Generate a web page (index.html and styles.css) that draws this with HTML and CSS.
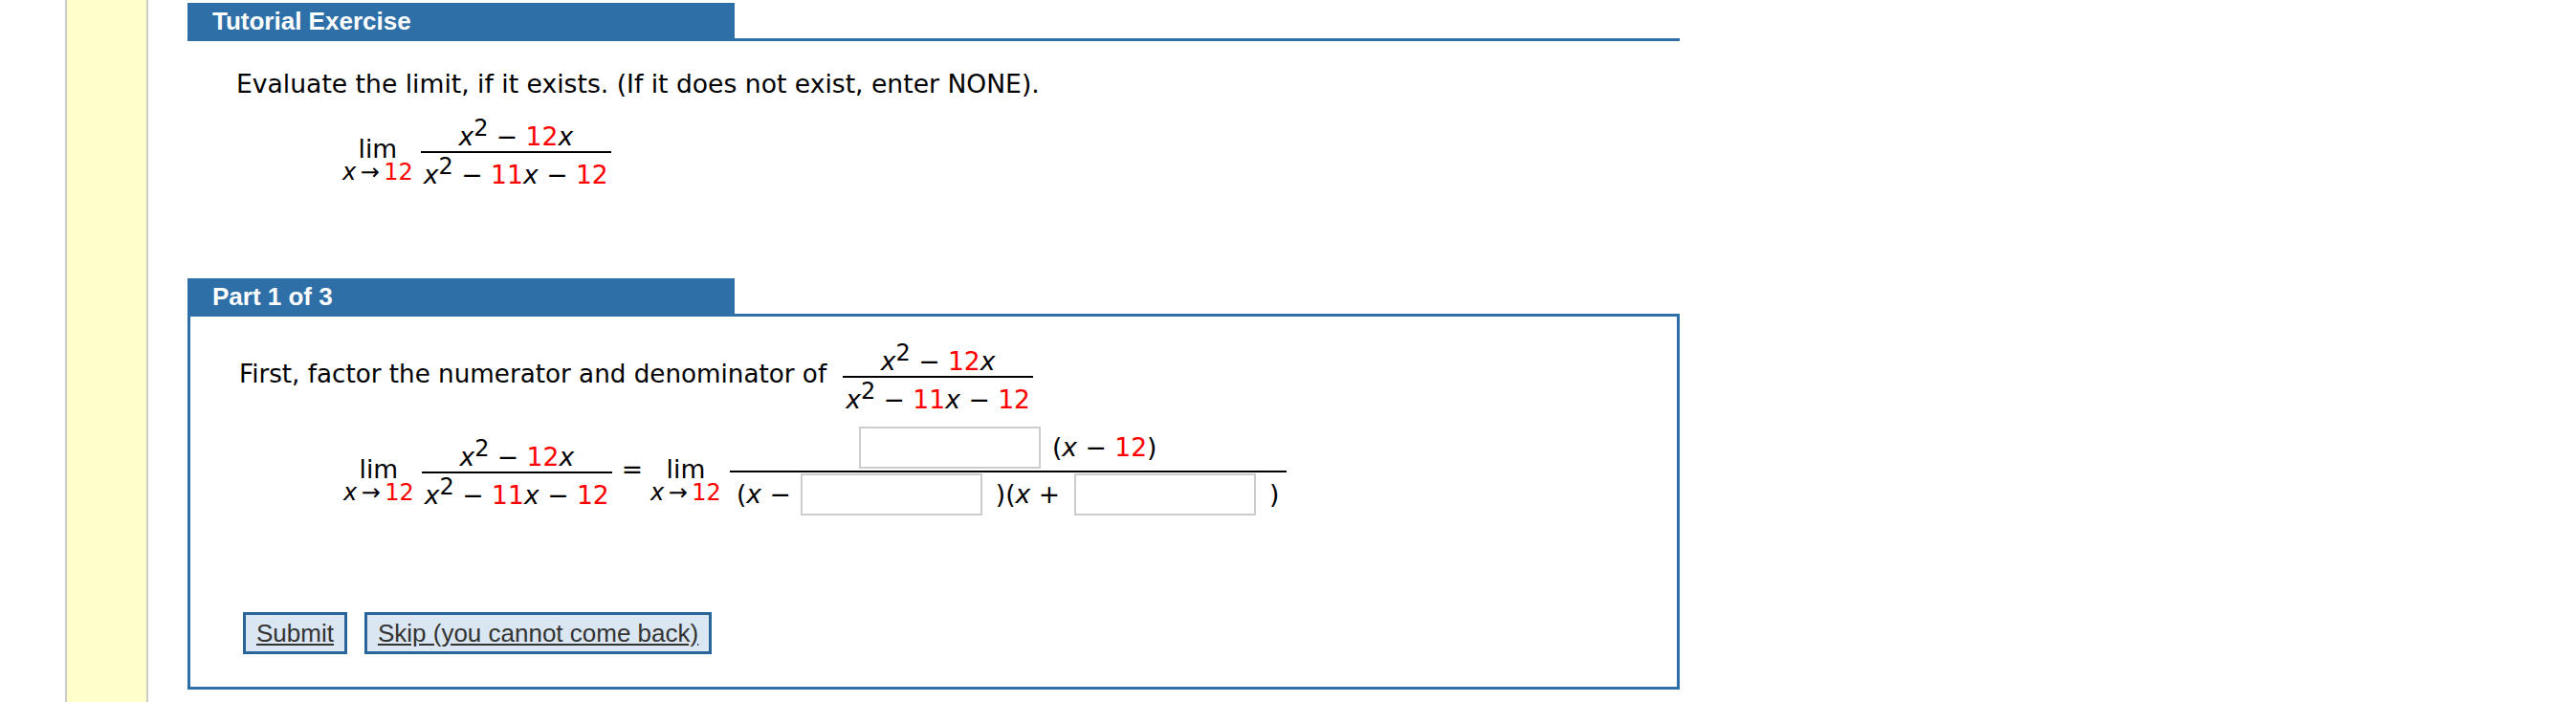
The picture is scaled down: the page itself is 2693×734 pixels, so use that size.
FILE: index.html
```html
<!DOCTYPE html>
<html lang="en">
<head>
  <meta charset="UTF-8">
  <title>Tutorial Exercise</title>
  <link rel="stylesheet" href="styles.css">
</head>
<body>

  <div class="sidebar"></div>

  <div class="main">
    <div class="tab-row">
      <div class="tab">Tutorial Exercise</div>
    </div>

    <div class="intro">
      <p class="question">Evaluate the limit, if it exists. (If it does not exist, enter NONE).</p>
      <div class="math math-first">
        <div class="lim"><span>lim</span><span class="lim-to"><i>x</i><span class="arrow">→</span><b>12</b></span></div>
        <div class="frac">
          <div class="num"><i>x</i><sup>2</sup> − <b>12</b><i>x</i></div>
          <div class="den"><i>x</i><sup>2</sup> − <b>11</b><i>x</i> − <b>12</b></div>
        </div>
      </div>
    </div>

    <div class="tab-row">
      <div class="tab">Part 1 of 3</div>
    </div>

    <div class="panel">
      <div class="factor-line">
        <span class="factor-text">First, factor the numerator and denominator of</span>
        <div class="frac">
          <div class="num"><i>x</i><sup>2</sup> − <b>12</b><i>x</i></div>
          <div class="den"><i>x</i><sup>2</sup> − <b>11</b><i>x</i> − <b>12</b></div>
        </div>
      </div>

      <div class="math math-answer">
        <div class="lim"><span>lim</span><span class="lim-to"><i>x</i><span class="arrow">→</span><b>12</b></span></div>
        <div class="frac">
          <div class="num"><i>x</i><sup>2</sup> − <b>12</b><i>x</i></div>
          <div class="den"><i>x</i><sup>2</sup> − <b>11</b><i>x</i> − <b>12</b></div>
        </div>
        <span class="equals">=</span>
        <div class="lim"><span>lim</span><span class="lim-to"><i>x</i><span class="arrow">→</span><b>12</b></span></div>
        <div class="frac frac-answer">
          <div class="num num-answer">
            <input type="text" class="answer">
            <span class="after-box">(<i>x</i> − <b>12</b>)</span>
          </div>
          <div class="den den-answer">
            <span>(<i>x</i> −</span>
            <input type="text" class="answer">
            <span class="between">)(<i>x</i> +</span>
            <input type="text" class="answer">
            <span>)</span>
          </div>
        </div>
      </div>

      <div class="buttons">
        <a class="btn" href="#">Submit</a>
        <a class="btn" href="#">Skip (you cannot come back)</a>
      </div>
    </div>
  </div>

</body>
</html>
```

FILE: styles.css
```css
body {
  margin: 0;
  height: 734px;
  overflow: hidden;
  display: flex;
  background-color: #fff;
  color: #000;
  font-family: "DejaVu Sans", sans-serif;
  font-size: 26.6px;
}
.sidebar {
  width: 83px;
  margin-left: 68px;
  background-color: #ffc;
  border-left: 2px solid #ccc;
  border-right: 2px solid #ccc;
}
.main {
  width: 1560px;
  margin-left: 41px;
  padding-top: 3px;
}
.tab-row {
  border-bottom: 3px solid #2e6fa8;
  height: 37px;
}
.tab {
  width: 546px;
  height: 40px;
  line-height: 38px;
  padding-left: 26px;
  background-color: #2e6fa8;
  color: #fff;
  font-family: "Liberation Sans", Arial, sans-serif;
  font-size: 26px;
  font-weight: bold;
}
.intro {
  box-sizing: border-box;
  height: 248px;
  padding-top: 30px;
}
.question {
  margin: 0 0 25px 51px;
  line-height: 30px;
}
.math {
  display: flex;
  align-items: center;
}
.math-first {
  margin-left: 162px;
}
.lim {
  display: flex;
  flex-direction: column;
  align-items: center;
  line-height: 26px;
  margin-right: 8px;
}
.lim-to {
  font-size: 24px;
  line-height: 22px;
}
.arrow {
  margin: 0 4.5px;
}
b {
  font-weight: normal;
  color: #f00;
}
sup {
  font-size: 24px;
  line-height: 0;
  vertical-align: 10px;
}
.frac {
  display: flex;
  flex-direction: column;
  align-items: center;
}
.num {
  line-height: 30px;
  padding: 0 3px;
  border-bottom: 2px solid #000;
  align-self: stretch;
  text-align: center;
}
.den {
  line-height: 46px;
  padding: 0 3px;
}
.panel {
  box-sizing: border-box;
  width: 100%;
  height: 390px;
  border: 3px solid #2e6fa8;
  border-top: none;
}
.factor-line {
  display: flex;
  align-items: center;
  padding: 32px 0 0 51px;
}
.factor-text {
  margin: 0 17px 22px 0;
  font-size: 26.2px;
}
.math-answer {
  margin: 6px 0 0 160px;
}
.equals {
  margin: 0 8px 24px 10px;
}
.frac-answer {
  width: 582px;
  margin: 0 0 18px 1px;
}
.num-answer, .den-answer {
  display: flex;
  align-items: center;
  white-space: pre;
}
.num-answer {
  box-sizing: border-box;
  height: 47px;
  line-height: 44px;
  padding: 0 0 3px 135px;
}
.den-answer {
  align-self: stretch;
  height: 45px;
  line-height: 44px;
  padding: 0 0 0 7px;
}
.answer {
  width: 190px;
  height: 44px;
  box-sizing: border-box;
  margin: 0;
  padding: 0;
  background-color: #fff;
  border: 2px solid #ccc;
}
.after-box {
  margin-left: 12px;
}
.den-answer .answer {
  margin: 0 14px 0 10px;
}
.den-answer .between {
  margin-right: 5px;
}
.buttons {
  display: flex;
  gap: 18px;
  padding-left: 55px;
  margin-top: 83px;
}
.btn {
  box-sizing: border-box;
  height: 44px;
  line-height: 38px;
  padding: 0 11px;
  background-color: #dae6f1;
  border: 3px solid #2a6599;
  color: #333;
  font-family: "Liberation Sans", Arial, sans-serif;
  font-size: 26px;
}
```
